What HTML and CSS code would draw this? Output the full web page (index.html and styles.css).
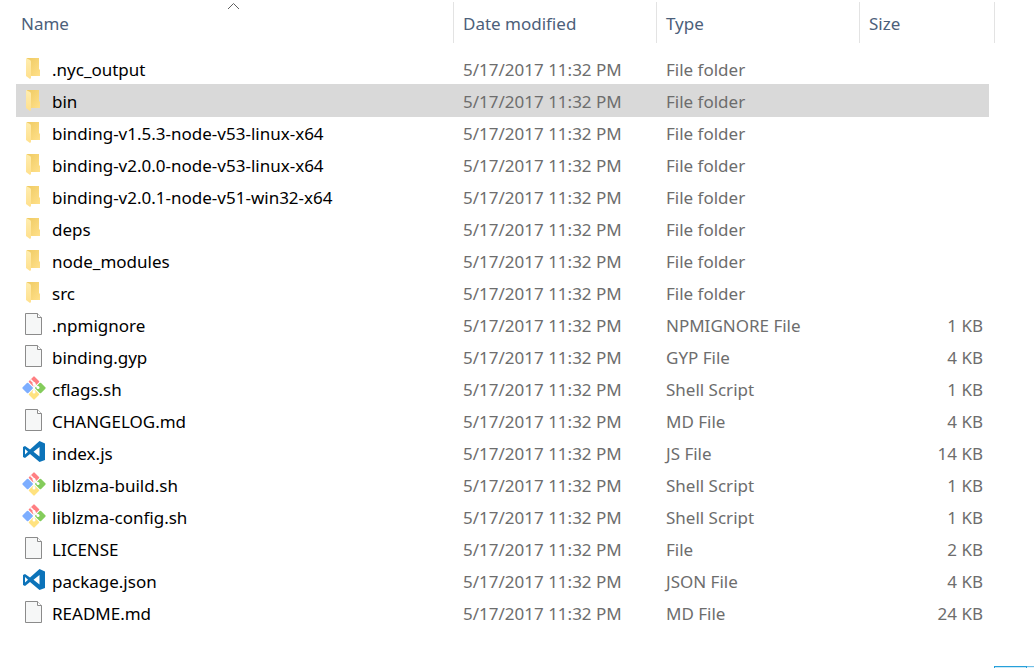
FILE: index.html
```
<!DOCTYPE html>
<html lang="en">
<head>
<meta charset="utf-8">
<title>Files</title>
<link rel="stylesheet" href="styles.css">
</head>
<body>
<svg class="sprite" aria-hidden="true">
  <defs>
    <linearGradient id="folder-back" x1="0" y1="0" x2="1" y2="1"><stop offset="0" stop-color="#efca62"/><stop offset="1" stop-color="#ffe08a"/></linearGradient>
    <linearGradient id="folder-flap" x1="0" y1="0" x2="0" y2="1"><stop offset="0" stop-color="#ffedb0"/><stop offset="1" stop-color="#ffe08c"/></linearGradient>
  </defs>
  <symbol id="folder" viewBox="0 0 24 32">
    <path fill="url(#folder-back)" d="M5 6H17V17L18 18V24H8L5 22Z"/>
    <path fill="url(#folder-flap)" d="M4 6L8 8Q9 8.500 9 10V26L8 27L4 24Z"/>
  </symbol>
  <symbol id="file" viewBox="0 0 24 32">
    <path fill="#f6f7f7" stroke="#8b8b8b" d="M3.500 5.500H15.500L19.500 9.500V26.500H3.500Z"/>
    <path fill="#fff" stroke="#8b8b8b" d="M15.500 5.500V9.500H19.500"/>
  </symbol>
  <symbol id="shell" viewBox="0 0 24 32">
    <g transform="rotate(45 12 16)">
      <rect fill="#ff7f82" x="3.500" y="7.500" width="8" height="8" rx="1"/>
      <rect fill="#84cc5b" x="12.500" y="7.500" width="8" height="8" rx="1"/>
      <rect fill="#7daeff" x="3.500" y="16.500" width="8" height="8" rx="1"/>
      <rect fill="#ffe27f" x="12.500" y="16.500" width="8" height="8" rx="1"/>
    </g>
    <path fill="none" stroke="#fff" stroke-width="1.500" d="M8.500 7.500L12 11V20M12.500 12L16 15.500"/>
    <g fill="#fff"><circle cx="12" cy="11.500" r="1.500"/><circle cx="12" cy="20" r="1.500"/><circle cx="16" cy="15.500" r="1.500"/></g>
  </symbol>
  <symbol id="code" viewBox="0 0 24 32">
    <path fill="#0c73b9" fill-rule="evenodd" d="M17.500 5L23 7.500V24L17.500 26L8 18L3 22L1 21V11L3 10L8 13.500ZM17.500 11L11.500 15.750L17.500 20.500ZM3 13V18.500L6 15.750Z"/>
  </symbol>
</svg>
<main class="page">
  <table class="files">
    <colgroup><col><col class="col-wide"><col class="col-wide"><col class="col-size"><col class="col-edge"></colgroup>
    <thead>
      <tr>
        <th scope="col" aria-sort="ascending"><button class="head head-name" type="button">Name<svg class="sort" viewBox="0 0 13 8" aria-hidden="true"><path d="M1 7L6.500 1.500L12 7"/></svg></button></th>
        <th scope="col"><button class="head" type="button">Date modified</button></th>
        <th scope="col"><button class="head" type="button">Type</button></th>
        <th scope="col" colspan="2"><button class="head" type="button">Size</button></th>
      </tr>
    </thead>
    <tbody id="rows"></tbody>
  </table>
  <footer class="status">
    <button class="view view-on" type="button" aria-label="Details view"></button>
    <button class="view" type="button" aria-label="Large icons view"></button>
  </footer>
</main>
<script src="files.js"></script>
</body>
</html>
```
FILE: styles.css
```
* { box-sizing: border-box; }
body { margin: 0; background: #fff; font: 17px/32px "Noto Sans", "Open Sans", sans-serif; color: #000; }
.sprite { position: absolute; width: 0; height: 0; }
.page { display: flex; flex-direction: column; justify-content: space-between; height: 100vh; overflow: hidden; padding: 0 0 0 16px; }
.files { width: calc(100% - 39px); table-layout: fixed; border-collapse: collapse; }
.col-wide { width: 203px; }
.col-size { width: 129px; }
.col-edge { width: 6px; }
th { padding: 2px 0 9px; font-weight: 400; text-align: left; vertical-align: top; }
.head { display: block; position: relative; width: 100%; height: 41px; margin: 0; padding: 2px 9px 0; border: 0; border-right: 1px solid #e3e3e3; background: none; font: inherit; color: #4c607a; text-align: left; }
.head-name { padding-left: 5px; }
.sort { position: absolute; top: 0; left: 50%; width: 13px; height: 8px; margin-left: -8px; fill: none; stroke: #606060; }
td { height: 32px; padding: 4px 9px 0; line-height: 28px; color: #6d6d6d; white-space: nowrap; }
.name { display: flex; align-items: center; gap: 6px; padding: 0 6px; color: #000; }
.label { padding-top: 4px; }
.icon { flex: none; width: 24px; height: 32px; }
.size { padding-right: 6px; text-align: right; }
.edge { padding: 0; }
.selected td:not(.edge) { background: #d9d9d9; box-shadow: 0 1px #d9d9d9; }
.status { display: flex; justify-content: flex-end; height: 2px; overflow: hidden; }
.view { flex: none; width: 7px; height: 26px; padding: 0; border: 1px solid #70c0e7; border-width: 1px 0; background: #e5f3fb; }
.view-on { width: 33px; border: 1px solid #26a0da; background: #cbe8f6; }
```
FILE: files.js
```
const files = [
  ["folder", ".nyc_output", "File folder", ""],
  ["folder", "bin", "File folder", "", true],
  ["folder", "binding-v1.5.3-node-v53-linux-x64", "File folder", ""],
  ["folder", "binding-v2.0.0-node-v53-linux-x64", "File folder", ""],
  ["folder", "binding-v2.0.1-node-v51-win32-x64", "File folder", ""],
  ["folder", "deps", "File folder", ""],
  ["folder", "node_modules", "File folder", ""],
  ["folder", "src", "File folder", ""],
  ["file", ".npmignore", "NPMIGNORE File", "1 KB"],
  ["file", "binding.gyp", "GYP File", "4 KB"],
  ["shell", "cflags.sh", "Shell Script", "1 KB"],
  ["file", "CHANGELOG.md", "MD File", "4 KB"],
  ["code", "index.js", "JS File", "14 KB"],
  ["shell", "liblzma-build.sh", "Shell Script", "1 KB"],
  ["shell", "liblzma-config.sh", "Shell Script", "1 KB"],
  ["file", "LICENSE", "File", "2 KB"],
  ["code", "package.json", "JSON File", "4 KB"],
  ["file", "README.md", "MD File", "24 KB"]
];
document.getElementById("rows").innerHTML = files.map(([icon, name, type, size, selected]) => `
  <tr${selected ? ' class="selected"' : ""}>
    <td class="name"><svg class="icon" aria-hidden="true"><use href="#${icon}"/></svg><span class="label">${name}</span></td>
    <td>5/17/2017 11:32 PM</td>
    <td>${type}</td>
    <td class="size">${size}</td>
    <td class="edge"></td>
  </tr>`).join("");
```
